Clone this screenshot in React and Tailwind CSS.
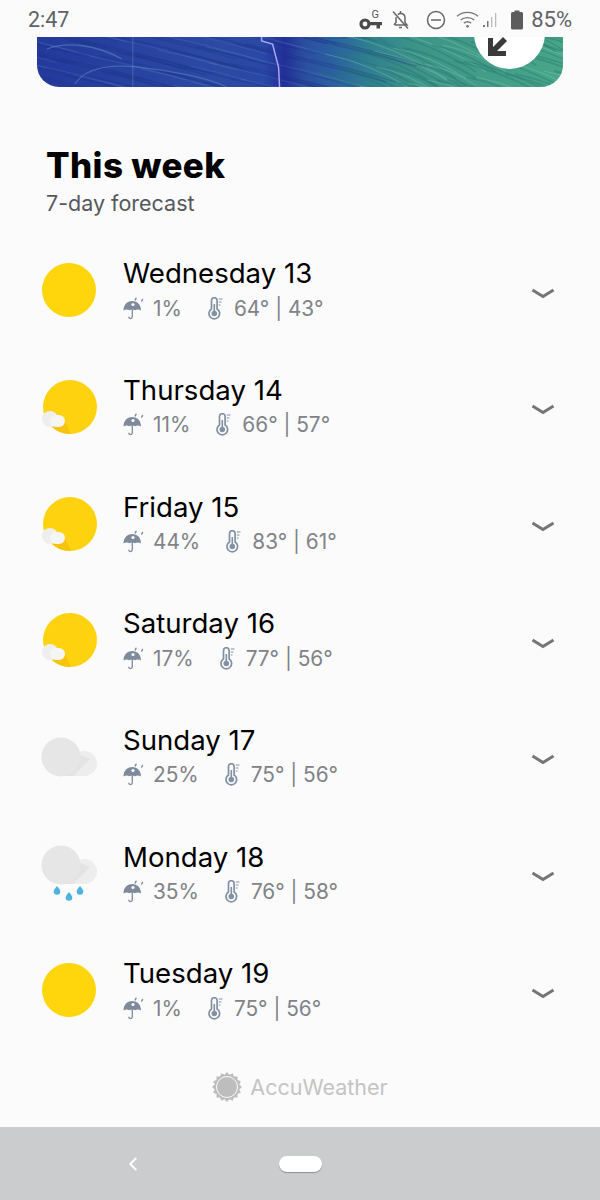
import React from "react";
import { ChevronLeft } from "lucide-react";

const days = [
  { name: "Wednesday 13", icon: "sun", rain: "1%", temp: "64° | 43°" },
  { name: "Thursday 14", icon: "partly", rain: "11%", temp: "66° | 57°" },
  { name: "Friday 15", icon: "partly", rain: "44%", temp: "83° | 61°" },
  { name: "Saturday 16", icon: "partly", rain: "17%", temp: "77° | 56°" },
  { name: "Sunday 17", icon: "cloudy", rain: "25%", temp: "75° | 56°" },
  { name: "Monday 18", icon: "rain", rain: "35%", temp: "76° | 58°" },
  { name: "Tuesday 19", icon: "sun", rain: "1%", temp: "75° | 56°" },
];

const Drop = ({ x, y }) => (
  <path d={`M${x} ${y - 5} q3.300 3.600 3.300 5.500 a3.300 3.300 0 0 1 -6.600 0 q0 -1.900 3.300 -5.500 Z`} fill="#4fb3e0" />
);

const WeatherIcon = ({ type }) => {
  if (type === "sun") {
    return (
      <svg width="60" height="60" viewBox="0 0 60 60">
        <circle cx="29" cy="30" r="27" fill="#ffd50c" />
      </svg>
    );
  }
  if (type === "partly") {
    return (
      <svg width="60" height="60" viewBox="0 0 60 60">
        <circle cx="30" cy="30" r="27" fill="#ffd20f" />
        <path d="M12 50 A27 27 0 0 0 31 57 Q28 50 25 44 Z" fill="#f7c30d" />
        <circle cx="10" cy="42" r="8" fill="#eeeeee" />
        <rect x="10" y="38" width="15" height="12" rx="6" fill="#f5f5f3" />
      </svg>
    );
  }
  const cy = type === "rain" ? 21 : 30;
  return (
    <svg width="60" height="60" viewBox="0 0 60 60">
      <circle cx="44.500" cy={cy + 6.500} r="12.500" fill="#ededed" />
      <rect x="28" y={cy + 6.500} width="16" height="12.500" fill="#ededed" />
      <path d={`M38 ${cy - 3} L50 ${cy + 2} L33 ${cy + 19} H24 Z`} fill="#e3e3e3" />
      <circle cx="21" cy={cy} r="19.500" fill="#e6e6e6" />
      {type === "rain" && (
        <>
          <Drop x={17} y={47} />
          <Drop x={29} y={53} />
          <Drop x={40} y={47} />
        </>
      )}
    </svg>
  );
};

const Umbrella = () => (
  <svg width="21" height="23" viewBox="0 0 21 23" className="shrink-0">
    <path d="M0.5 13.500 C0.5 7 5 4 9.500 4 C14 4 18 7.500 18 13.500 C16 12.300 14 12.300 12 13.300 C10.500 12.300 8 12.300 6.500 13.300 C4.500 12.300 2.500 12.300 0.5 13.500 Z" fill="#7f8b9b" />
    <path d="M9.300 12 V19.800 a1.800 1.800 0 0 1 -3.600 0" fill="none" stroke="#7f8b9b" strokeWidth="1.300" />
    <circle cx="10" cy="7.500" r="1.600" fill="#fbfbfb" />
    <path d="M13 1.200 l-0.700 1.700 M19.500 2.500 l-0.800 1.500" stroke="#7f8b9b" strokeWidth="1.500" strokeLinecap="round" />
  </svg>
);

const Thermometer = () => (
  <svg width="15" height="23" viewBox="0 0 15 23" className="shrink-0">
    <path d="M3.500 3.500 a2.800 2.800 0 0 1 5.600 0 V12 a5.300 5.300 0 1 1 -5.600 0 Z" fill="#fbfbfb" stroke="#8290a3" strokeWidth="1.700" />
    <circle cx="6.300" cy="16.500" r="2.800" fill="#8290a3" />
    <path d="M6.300 7 V15" stroke="#8290a3" strokeWidth="1.600" />
    <path d="M10.800 2 H14.500 M10.800 5 H13.500 M10.800 8 H12.500" stroke="#8290a3" strokeWidth="1" />
  </svg>
);

const Chevron = () => (
  <svg width="24" height="12" viewBox="0 0 24 12">
    <path d="M1.500 2 L12 8.500 L22.500 2" fill="none" stroke="#757575" strokeWidth="3" />
  </svg>
);

// flow lines of the wind map, left half is blue, right half teal
const flowLines = Array.from({ length: 150 }, (_, i) => {
  const x = ((i * 73) % 640) - 100;
  const y = ((i * 29) % 70) - 20;
  const len = 50 + ((i * 17) % 70);
  const right = x > 280;
  const lift = i % 3 === 0;
  return {
    d: `M${x} ${y} q${len / 2} ${len * 0.1} ${len} ${len * (right ? 0.42 : 0.25)}`,
    stroke: right ? (lift ? "#8fd8bd" : "#27766f") : lift ? "#5a86c8" : "#1d3288",
    opacity: right ? 0.42 : 0.3,
    width: 0.8 + (i % 3) * 0.5,
  };
});

const MapCard = () => (
  <svg viewBox="0 0 527 50" preserveAspectRatio="none" className="w-full h-full block">
    <defs>
      <linearGradient id="mapFill" x1="0" y1="0" x2="1" y2="0">
        <stop offset="0" stopColor="#233a9c" />
        <stop offset="0.35" stopColor="#2c4aa3" />
        <stop offset="0.43" stopColor="#2a48a5" />
        <stop offset="0.47" stopColor="#232f99" />
        <stop offset="0.51" stopColor="#2b4f9f" />
        <stop offset="0.56" stopColor="#2a5fa0" />
        <stop offset="0.63" stopColor="#2f7f90" />
        <stop offset="0.72" stopColor="#3d9488" />
        <stop offset="1" stopColor="#48a688" />
      </linearGradient>
    </defs>
    <rect width="527" height="50" fill="url(#mapFill)" />
    {flowLines.map((line, i) => (
      <path key={i} d={line.d} fill="none" stroke={line.stroke} strokeOpacity={line.opacity} strokeWidth={line.width} />
    ))}
    <path d="M38 47 C48 32 70 27 100 30 C130 33 170 40 190 50" fill="none" stroke="#5d8cc8" strokeOpacity="0.5" strokeWidth="1.300" />
    <path d="M10 12 C30 4 60 8 85 22" fill="none" stroke="#6fa0c8" strokeOpacity="0.45" strokeWidth="1.300" />
    <path d="M96 0 V50" fill="none" stroke="#7f9ac8" strokeOpacity="0.4" />
    <path d="M225 0 V4 L236 7 L242 30 L243 50" fill="none" stroke="#a6a8f5" strokeWidth="1.500" />
  </svg>
);

const StatusIcons = () => (
  <div className="flex items-center">
    <svg width="23" height="24" viewBox="0 0 23 24" className="mr-[9px]">
      <circle cx="6" cy="16" r="4" fill="none" stroke="#4a4a4a" strokeWidth="3.200" />
      <path d="M10 14 H23 V17.200 H21 V20.500 H17.500 V17.200 H10 Z" fill="#4a4a4a" />
      <text x="12.500" y="10" fontSize="11" fill="#555" fontFamily="Roboto, sans-serif">G</text>
    </svg>
    <svg width="19" height="20" viewBox="0 0 19 20" className="mr-[16px]" fill="none" stroke="#666" strokeWidth="1.500">
      <path d="M4 15 H16 L14 12.500 V8 C14 5.500 12.500 3.500 9.500 3.500 C8.500 3.500 7.500 4 6.800 4.600 M5.200 7 C5 7.500 5 8 5 8.500 V12.500 L3 15" />
      <path d="M8 17.500 H11 M9.500 1 V3" />
      <path d="M2 1.500 L17 18.500" />
    </svg>
    <svg width="20" height="20" viewBox="0 0 20 20" className="mr-[10px]" fill="none" stroke="#666" strokeWidth="1.500">
      <circle cx="10" cy="10" r="8.500" />
      <path d="M5 10 H15" />
    </svg>
    <svg width="23" height="19" viewBox="0 0 22 18" className="mr-[3px]" fill="none" stroke="#777" strokeWidth="1.300">
      <path d="M1 6 C6.500 1 15.500 1 21 6" />
      <path d="M4.500 9.500 C8 6.500 14 6.500 17.500 9.500" />
      <path d="M7.500 12.500 C9.500 11 12.500 11 14.500 12.500" />
      <circle cx="11" cy="15.500" r="1.300" fill="#777" stroke="none" />
    </svg>
    <svg width="15" height="18" viewBox="0 0 15 18" className="mr-[13px]">
      <path d="M1 14 H3 V16 H1 Z M5 10 H6.500 V16 H5 Z" fill="#777" />
      <path d="M9 6 H10.300 V16 H9 Z M13 2 H14.300 V16 H13 Z" fill="#bbb" />
    </svg>
    <svg width="14" height="20" viewBox="0 0 14 20" className="mr-[7px]">
      <path d="M4.500 0.500 H9.500 V2 H11.500 A1.500 1.500 0 0 1 13 3.500 V18 A1.500 1.500 0 0 1 11.500 19.500 H2.500 A1.500 1.500 0 0 1 1 18 V3.500 A1.500 1.500 0 0 1 2.500 2 H4.500 Z" fill="#5c5c5c" />
    </svg>
    <span className="text-[22px] leading-none text-[#5f6368]">85%</span>
  </div>
);

const DayRow = ({ day }) => (
  <div className="h-[116.67px] flex items-center pl-[40px] pr-[45px]">
    <div className="w-[83px] shrink-0">
      <WeatherIcon type={day.icon} />
    </div>
    <div className="flex-1 mt-[3px]">
      <div className="text-[27.600px] leading-[33px] text-black">{day.name}</div>
      <div className="flex items-center h-[36px] text-[20.800px] text-[#808388]">
        <Umbrella />
        <span className="ml-[9px] mr-[26px]">{day.rain}</span>
        <Thermometer />
        <span className="ml-[11px]">{day.temp}</span>
      </div>
    </div>
    <div className="mt-[7px]">
      <Chevron />
    </div>
  </div>
);

const App = () => {
  return (
    <div className="w-[600px] h-[1200px] flex flex-col overflow-hidden bg-[#fbfbfb] font-['Inter','Liberation_Sans',sans-serif]">
      <div className="h-[37px] shrink-0 flex items-center justify-between pl-[28px] pr-[28px] pt-[2px] font-['Roboto',sans-serif]">
        <span className="text-[21.500px] leading-none text-[#5f6368]">2:47</span>
        <StatusIcons />
      </div>

      <div className="relative mx-[37px] h-[50px] shrink-0 rounded-b-[22px] overflow-hidden">
        <MapCard />
        <div className="absolute left-[437px] -top-[39px] w-[71px] h-[71px] rounded-full bg-white">
          <svg width="22" height="22" viewBox="0 0 22 22" className="ml-[12px] mt-[38px]">
            <path d="M2 2 V20 H20 V15 H11 L21 5 L17 1 L7 11 V2 Z" fill="#3a3a3a" />
          </svg>
        </div>
      </div>

      <div className="pl-[46px] pt-[55px] h-[145px] shrink-0">
        <h1 className="text-[35px] leading-[46px] font-extrabold text-black tracking-[0.35px]">This week</h1>
        <p className="text-[21.500px] leading-[30px] text-[#55585c]">7-day forecast</p>
      </div>

      <div>
        {days.map((day) => (
          <DayRow key={day.name} day={day} />
        ))}
      </div>

      <div className="flex-1 flex items-center justify-center gap-[8px] pb-[2px]">
        <svg width="30" height="30" viewBox="0 0 30 30">
          <polygon
            fill="#bdbdbd"
            points={Array.from({ length: 32 }, (_, i) => {
              const r = i % 2 === 0 ? 15 : 12.5;
              const a = (i * Math.PI) / 16;
              return `${15 + r * Math.cos(a)},${15 + r * Math.sin(a)}`;
            }).join(" ")}
          />
          <circle cx="15" cy="15" r="10.500" fill="#bdbdbd" stroke="#fbfbfb" strokeWidth="1" />
        </svg>
        <span className="text-[21.500px] text-[#c4c4c4]">AccuWeather</span>
      </div>

      <div className="h-[73px] shrink-0 bg-[#cbccce] relative flex items-center">
        <ChevronLeft size={22} strokeWidth={2} color="#fff" className="ml-[122px] mt-[1px]" />
        <div className="absolute left-[279px] top-[29px] w-[43px] h-[16px] rounded-full bg-white shadow-[0_1px_1px_rgba(0,0,0,0.3)]" />
      </div>
    </div>
  );
};

export default App;
